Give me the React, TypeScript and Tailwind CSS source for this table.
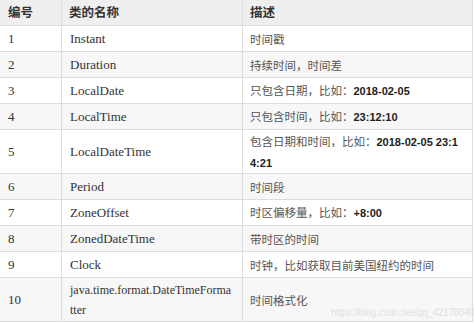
import React from "react";

type Row = { n: string; name: React.ReactNode; desc: React.ReactNode; tall?: boolean; long?: boolean };

const B = ({ children }: { children: React.ReactNode }) => (
  <span className="font-bold text-[11px] text-[#222] font-['Liberation_Sans',Arial,sans-serif]">{children}</span>
);

const rows: Row[] = [
  { n: "1", name: "Instant", desc: "时间戳" },
  { n: "2", name: "Duration", desc: "持续时间，时间差" },
  { n: "3", name: "LocalDate", desc: <>只包含日期，比如：<B>2018-02-05</B></> },
  { n: "4", name: "LocalTime", desc: <>只包含时间，比如：<B>23:12:10</B></> },
  {
    n: "5",
    name: "LocalDateTime",
    desc: (
      <>
        包含日期和时间，比如：<B>2018-02-05 23:1</B>
        <br />
        <B>4:21</B>
      </>
    ),
    tall: true,
  },
  { n: "6", name: "Period", desc: "时间段" },
  { n: "7", name: "ZoneOffset", desc: <>时区偏移量，比如：<B>+8:00</B></> },
  { n: "8", name: "ZonedDateTime", desc: "带时区的时间" },
  { n: "9", name: "Clock", desc: "时钟，比如获取目前美国纽约的时间" },
  {
    n: "10",
    name: (
      <>
        java.time.format.DateTimeForma
        <br />
        tter
      </>
    ),
    desc: "时间格式化",
    tall: true,
    long: true,
  },
];

export default function App() {
  return (
    <div className="relative w-[474px] h-[323px] overflow-hidden bg-white">
      <div className="w-[473px]">
        <div className="flex h-[26px] bg-[#efefef] border-b border-[#dcdcdc] text-[12.5px] font-bold text-[#333] font-['Noto_Sans_CJK_SC',sans-serif]">
          <div className="w-[62px] shrink-0 border-r border-[#dcdcdc] pl-[8px] flex items-center">编号</div>
          <div className="w-[181px] shrink-0 border-r border-[#dcdcdc] pl-[7px] flex items-center">类的名称</div>
          <div className="w-[230px] shrink-0 border-r border-[#dcdcdc] pl-[7px] flex items-center">描述</div>
        </div>
        {rows.map((r, i) => (
          <div
            key={r.n}
            className={`flex border-b border-[#dcdcdc] ${r.tall ? "h-[44px]" : "h-[26px]"} ${i % 2 === 1 ? "bg-[#f7f7f7]" : "bg-white"}`}
          >
            <div className="w-[62px] shrink-0 border-r border-[#dcdcdc] pl-[8px] flex items-center text-[13px] text-[#333] font-['Liberation_Serif',serif]">
              {r.n}
            </div>
            <div
              className={`w-[181px] shrink-0 border-r border-[#dcdcdc] pl-[8px] flex items-center leading-[20px] text-[#333] whitespace-nowrap font-['Liberation_Serif',serif] ${r.long ? "text-[12px]" : "text-[13px]"}`}
            >
              <div>{r.name}</div>
            </div>
            <div className="w-[230px] shrink-0 border-r border-[#dcdcdc] pl-[7px] flex items-center text-[11.5px] leading-[20px] text-[#555] whitespace-nowrap font-['Noto_Sans_CJK_SC',sans-serif]">
              <div>{r.desc}</div>
            </div>
          </div>
        ))}
      </div>
      <div className="absolute left-[331px] top-[305px] text-[10px] tracking-[-0.3px] text-[#e2e2e2] whitespace-nowrap font-['Liberation_Sans',Arial,sans-serif]">
        https://blog.csdn.net/qq_42178840
      </div>
    </div>
  );
}
